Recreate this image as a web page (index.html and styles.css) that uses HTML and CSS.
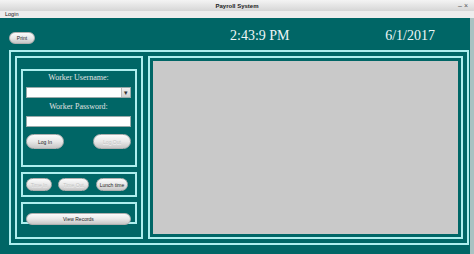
FILE: index.html
```html
<!DOCTYPE html>
<html lang="en">
<head>
    <meta charset="UTF-8">
    <title>Payroll System</title>
    <link rel="stylesheet" href="styles.css">
</head>
<body>
    <div class="window">
        <div class="titlebar">
            <span></span>
            <span class="title">Payroll System</span>
            <span class="controls">&ndash; &times;</span>
        </div>
        <div class="menubar"><span>Login</span></div>
        <div class="content">
            <div class="header">
                <button class="pill print">Print</button>
                <div class="clock">2:43:9 PM</div>
                <div class="date">6/1/2017</div>
            </div>
            <div class="frame">
                <div class="left-panel">
                    <div class="box login-box">
                        <div class="label">Worker Username:</div>
                        <div class="combo"><span class="arrow">&#9662;</span></div>
                        <div class="label">Worker Password:</div>
                        <div class="field"></div>
                        <div class="row">
                            <button class="pill log-btn">Log In</button>
                            <button class="pill log-btn" disabled>Log Out</button>
                        </div>
                    </div>
                    <div class="box time-box">
                        <button class="pill time-in" disabled>Time In</button>
                        <button class="pill time-out" disabled>Time Out</button>
                        <button class="pill lunch">Lunch time</button>
                    </div>
                    <div class="box records-box">
                        <button class="pill records">View Records</button>
                    </div>
                </div>
                <div class="right-panel">
                    <div class="display"></div>
                </div>
            </div>
        </div>
    </div>
</body>
</html>
```

FILE: styles.css
```css
body {
    margin: 0;
    width: 474px;
    height: 254px;
    overflow: hidden;
    font-family: "Liberation Sans", Arial, sans-serif;
}
.window {
    display: flex;
    flex-direction: column;
    height: 254px;
}
.titlebar {
    height: 11px;
    display: grid;
    grid-template-columns: 1fr auto 1fr;
    align-items: center;
    background: linear-gradient(#f4f4f4, #d6d6d6);
    font-size: 6px;
    color: #222;
}
.title {
    font-weight: bold;
}
.controls {
    justify-self: end;
    padding-right: 6px;
    font-size: 7px;
    color: #555;
}
.menubar {
    height: 7px;
    line-height: 7px;
    padding-left: 5px;
    background: #ededed;
    font-size: 5.5px;
    color: #111;
}
.content {
    flex: 1;
    background: #006666;
    padding-left: 9px;
    border-right: 4px solid #a9c2c2;
}
.header {
    height: 32px;
    display: flex;
    align-items: flex-start;
}
.clock, .date {
    font-family: "Liberation Serif", "Times New Roman", serif;
    font-size: 14px;
    line-height: 16px;
    color: #eef6f6;
    margin-top: 10px;
}
.clock {
    margin-left: 195px;
}
.date {
    margin-left: auto;
    margin-right: 35px;
}
.pill {
    box-sizing: border-box;
    padding: 0;
    border: 1px solid #b0b0b0;
    border-radius: 8px;
    background: linear-gradient(#fbfbfb, #e8e8e8 50%, #c6c6c6);
    font-family: "Liberation Sans", Arial, sans-serif;
    font-size: 5px;
    color: #222;
}
.pill:disabled {
    color: #c4c4c4;
    text-shadow: 0 1px 0 #f4f4f4;
}
.print {
    width: 26px;
    height: 12px;
    margin-top: 14px;
}
.frame {
    width: 460px;
    height: 195px;
    box-sizing: border-box;
    border: 2px solid #aeeeee;
    padding: 4px;
    display: flex;
    gap: 5px;
}
.left-panel {
    width: 128px;
    box-sizing: border-box;
    border: 2px solid #aeeeee;
    padding: 11px 4px 0;
    display: flex;
    flex-direction: column;
    gap: 5px;
}
.box {
    box-sizing: border-box;
    border: 2px solid #aeeeee;
}
.login-box {
    height: 98px;
    padding: 2px 4px 0 3px;
}
.label {
    height: 10px;
    line-height: 10px;
    text-align: center;
    font-family: "Liberation Serif", "Times New Roman", serif;
    font-size: 8px;
    color: #e2e2e2;
}
.label + .combo, .label + .field {
    margin-top: 4px;
}
.combo + .label {
    margin-top: 4px;
}
.combo, .field {
    height: 11px;
    background: #fff;
    box-sizing: border-box;
    border: 1px solid #9aa;
}
.combo {
    display: flex;
    justify-content: flex-end;
}
.arrow {
    width: 8px;
    background: linear-gradient(#f2f2f2, #d0d0d0);
    border-left: 1px solid #bbb;
    font-size: 7px;
    line-height: 9px;
    text-align: center;
    color: #333;
}
.row {
    margin-top: 7px;
    display: flex;
    justify-content: space-between;
}
.log-btn {
    width: 38px;
    height: 15px;
}
.time-box {
    height: 25px;
    padding: 4px 0 0 3px;
    display: flex;
    align-items: flex-start;
}
.time-box .pill {
    height: 13px;
}
.time-in {
    width: 26px;
}
.time-out {
    width: 31px;
    margin-left: 6px;
}
.lunch {
    width: 32px;
    margin-left: 7px;
}
.records-box {
    height: 22px;
    padding: 3px 4px 0 3px;
}
.records {
    width: 100%;
    height: 12px;
}
.right-panel {
    width: 315px;
    box-sizing: border-box;
    border: 2px solid #aeeeee;
    padding: 3px;
    display: flex;
}
.display {
    flex: 1;
    background: #c9c9c9;
}
```
